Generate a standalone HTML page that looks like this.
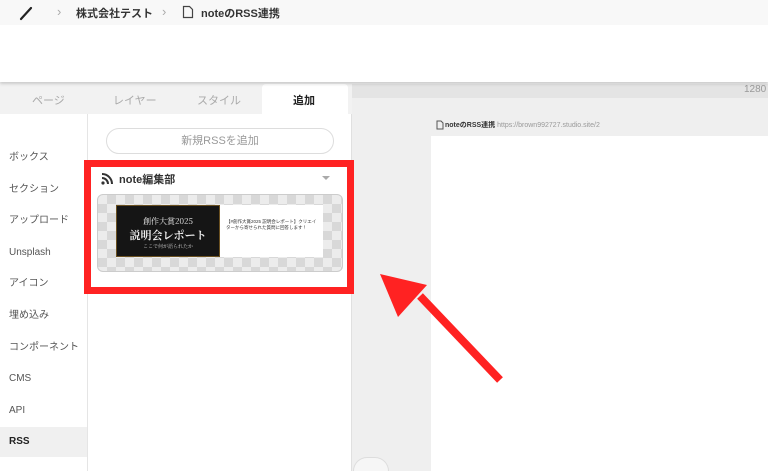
<!DOCTYPE html>
<html><head><meta charset="utf-8"><style>
*{margin:0;padding:0;box-sizing:border-box}
html,body{width:768px;height:471px;overflow:hidden}
body{background:#efefef;font-family:"Liberation Sans","Noto Sans CJK JP",sans-serif;position:relative;color:#333}
.abs{position:absolute}
</style></head><body>
<div class="abs" style="left:0;top:0;width:768px;height:82px;background:#fff;box-shadow:0 2px 3px rgba(0,0,0,.15);z-index:5">
 <div class="abs" style="left:0;top:0;width:768px;height:25px;background:#f8f8f8"></div>
 <svg class="abs" style="left:18px;top:5px" width="16" height="16"><path d="M3 14 L13 3" stroke="#222" stroke-width="2.2" stroke-linecap="round"/></svg>
 <div class="abs" style="left:57px;top:4px;font-size:13px;color:#aaa">›</div>
 <div class="abs" style="left:76px;top:5px;font-size:11px;font-weight:bold;color:#333">株式会社テスト</div>
 <div class="abs" style="left:162px;top:4px;font-size:13px;color:#aaa">›</div>
 <svg class="abs" style="left:182px;top:5px" width="12" height="14"><path d="M1.5 1.5h6l3 3v8h-9z" fill="none" stroke="#444" stroke-width="1.2"/></svg>
 <div class="abs" style="left:201px;top:5px;font-size:11px;font-weight:bold;color:#333">noteのRSS連携</div>
</div>
<div class="abs" style="left:352px;top:84px;width:416px;height:14px;background:#e4e4e4"></div>
<div class="abs" style="left:744px;top:84px;font-size:10px;color:#999">1280</div>
<svg class="abs" style="left:436px;top:120px" width="8" height="10"><path d="M1 1h4l2 2v6H1z" fill="none" stroke="#555" stroke-width="1"/></svg>
<div class="abs" style="left:445px;top:120px;font-size:7px;color:#333;font-weight:bold">noteのRSS連携 <span style="color:#999;font-weight:normal">https://brown992727.studio.site/2</span></div>
<div class="abs" style="left:431px;top:136px;width:337px;height:335px;background:#fff"></div>
<div class="abs" style="left:0;top:84px;width:352px;height:387px;background:#fff;border-right:1px solid #e0e0e0">
 <div class="abs" style="left:0;top:0;width:352px;height:30px;background:#f2f2f2"></div>
 <div class="abs" style="left:262px;top:0;width:86px;height:30px;background:#fff;border-radius:4px 4px 0 0"></div>
 <div class="abs" style="left:32px;top:8px;font-size:11px;color:#aaa">ページ</div>
 <div class="abs" style="left:113px;top:8px;font-size:11px;color:#aaa">レイヤー</div>
 <div class="abs" style="left:197px;top:8px;font-size:11px;color:#aaa">スタイル</div>
 <div class="abs" style="left:293px;top:8px;font-size:11px;color:#222;font-weight:bold">追加</div>
 <div class="abs" style="left:87px;top:30px;width:1px;height:357px;background:#e5e5e5"></div>
 <div class="abs" style="left:0;top:343px;width:87px;height:30px;background:#f0f0f0"></div>
 <div class="abs" style="left:9px;top:58px;font-size:10px;color:#555;line-height:31.6px">ボックス<br>セクション<br>アップロード<br>Unsplash<br>アイコン<br>埋め込み<br>コンポーネント<br>CMS<br>API<br><b style="color:#222">RSS</b></div>
 <div class="abs" style="left:106px;top:44px;width:228px;height:26px;border:1px solid #ddd;border-radius:13px;font-size:11px;color:#999;text-align:center;line-height:24px">新規RSSを追加</div>
</div>
<div class="abs" style="left:84px;top:160px;width:270px;height:134px;border:7px solid #ff2222;background:#fff"></div>
<svg class="abs" style="left:101px;top:173px" width="12" height="12"><circle cx="2" cy="10" r="1.6" fill="#333"/><path d="M1 5a6 6 0 0 1 6 6M1 1a10 10 0 0 1 10 10" fill="none" stroke="#333" stroke-width="2"/></svg>
<div class="abs" style="left:119px;top:171px;font-size:11px;font-weight:bold;color:#333">note編集部</div>
<div class="abs" style="left:322px;top:176px;width:0;height:0;border:4px solid transparent;border-top:4px solid #aaa"></div>
<div class="abs" style="left:97px;top:194px;width:246px;height:78px;border:1px solid #ccc;border-radius:6px;background-color:#ececec;background-image:linear-gradient(45deg,#d8d8d8 25%,transparent 25%,transparent 75%,#d8d8d8 75%),linear-gradient(45deg,#d8d8d8 25%,transparent 25%,transparent 75%,#d8d8d8 75%);background-size:18px 18px;background-position:0 0,9px 9px"></div>
<div class="abs" style="left:116px;top:205px;width:104px;height:52px;background:#151515;border:1px solid #6a5020;color:#eee;font-family:'Noto Serif CJK SC',serif;text-align:center">
 <div style="font-size:8px;margin-top:10px">創作大賞2025</div>
 <div style="font-size:11px;font-weight:bold">説明会レポート</div>
 <div style="font-size:5px;color:#ccc">ここで何が語られたか</div>
</div>
<div class="abs" style="left:220px;top:205px;width:103px;height:52px;background:#fff;font-size:4.5px;color:#333;padding:14px 6px">【#創作大賞2025 説明会レポート】クリエイターから寄せられた質問に回答します！</div>
<svg class="abs" style="left:0;top:0" width="768" height="471"><path d="M420 296 L500 380" stroke="#ff2222" stroke-width="8"/><path d="M380 274 L427 285 L398 317 Z" fill="#ff2222"/></svg>
<div class="abs" style="left:353px;top:457px;width:36px;height:14px;border-radius:18px 18px 0 0;background:#f6f6f6;border:1px solid #ddd;border-bottom:none"></div>
</body></html>
